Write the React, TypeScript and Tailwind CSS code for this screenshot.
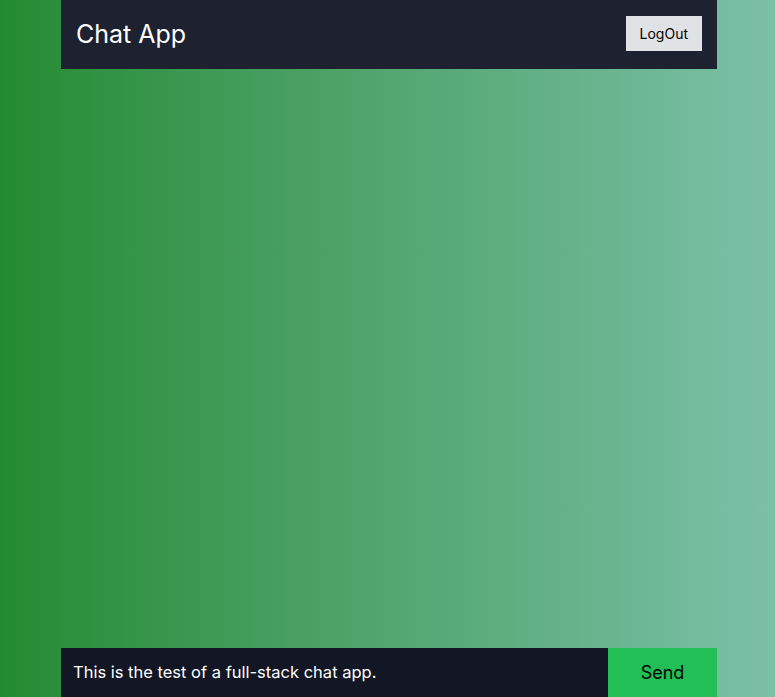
import { useState } from "react";

export default function App() {
  const [text, setText] = useState("This is the test of a full-stack chat app.");

  return (
    <div
      className="flex h-screen flex-col bg-gradient-to-r from-[#228b30] to-[#7bc0a8]"
      style={{ fontFamily: "Inter, 'Noto Sans', sans-serif" }}
    >
      <div className="ml-[61px] flex h-[69px] w-[656px] items-center justify-between bg-[#1e2230] pl-[15px] pr-[15px]">
        <h1 className="text-[25px] font-normal text-white">Chat App</h1>
        <button className="mb-[3px] h-[35px] bg-[#e1e2e6] px-[14px] text-[14px] text-black">LogOut</button>
      </div>

      <div className="flex-1" />

      <form
        className="ml-[61px] flex h-[49px] w-[656px]"
        onSubmit={(e) => {
          e.preventDefault();
          setText("");
        }}
      >
        <input
          value={text}
          onChange={(e) => setText(e.target.value)}
          className="flex-1 bg-[#121625] px-3 text-[16.5px] text-white outline-none"
        />
        <button type="submit" className="w-[109px] bg-[#21bf55] text-[18px] text-black">
          Send
        </button>
      </form>
    </div>
  );
}
